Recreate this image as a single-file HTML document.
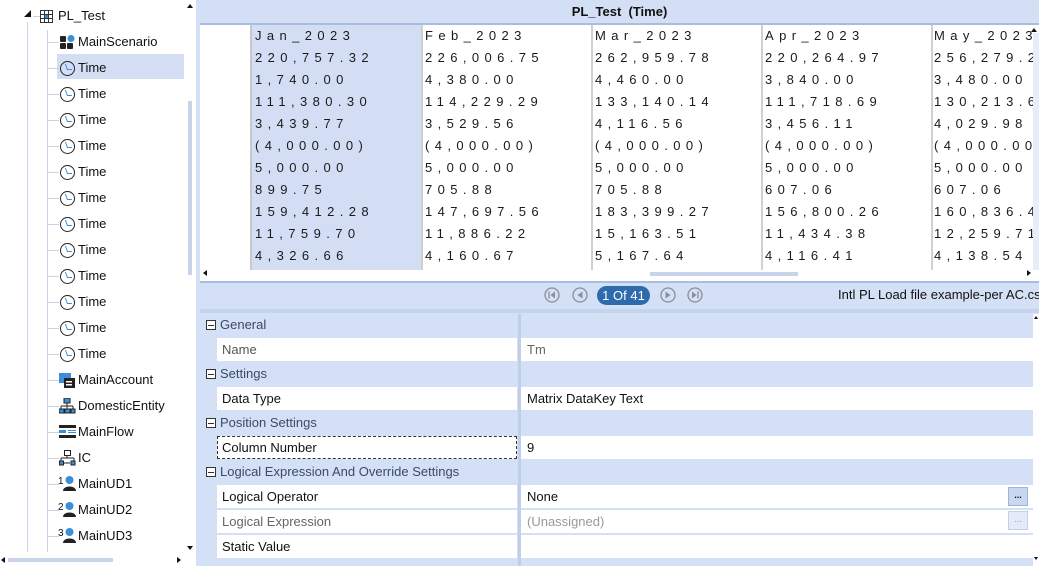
<!DOCTYPE html>
<html><head><meta charset="utf-8"><style>
*{margin:0;padding:0;box-sizing:border-box}
body{width:1039px;height:566px;overflow:hidden;position:relative;background:#d4e0f6;font-family:"Liberation Sans",sans-serif;font-size:13px;color:#111}
.a{position:absolute}
#left{left:0;top:0;width:196px;height:566px;background:#fff}
.it{position:absolute;left:78px;height:20px;line-height:20px;font-size:13px;color:#111}
.hl{position:absolute;left:47px;width:12px;height:1px;background:#c8d4ea}
.clk{position:absolute;left:60px;width:15px;height:15px;border:1.5px solid #222;border-radius:50%}
.clk:after{content:"";position:absolute;left:5px;top:2px;width:4px;height:5px;border-left:1.5px solid #3a8fd8;border-bottom:1.5px solid #3a8fd8;transform:skewX(20deg)}
.num{position:absolute;font-size:13px;letter-spacing:5.4px;color:#1a1a1a;white-space:nowrap}
.pr{position:absolute;left:200px;width:833px;height:24px;line-height:24px}
.grp{color:#3c4a66}
.box{position:absolute;left:6px;top:7px;width:10px;height:10px;border:1px solid #333;background:#fff}
.box:after{content:"";position:absolute;left:1px;top:3.5px;width:6px;height:1px;background:#333}
.lab{position:absolute;left:17px;width:300px;height:23px;background:#fff;padding-left:5px}
.val{position:absolute;left:321px;width:512px;height:23px;background:#fff;padding-left:6px}
</style></head><body>
<div id="left" class="a">
 <div class="a" style="left:27px;top:22px;width:1px;height:530px;background:#c8d4ea"></div>
 <div class="a" style="left:47px;top:30px;width:1px;height:522px;background:#c8d4ea"></div>
 <div class="a" style="left:24px;top:10px;width:0;height:0;border-left:7px solid transparent;border-bottom:7px solid #111"></div>
 <div class="a" style="left:33px;top:16px;width:7px;height:1px;background:#c8d4ea"></div>
 <svg class="a" style="left:39px;top:9px" width="15" height="15"><rect x="1.5" y="1.5" width="12" height="12" fill="none" stroke="#333"/><path d="M5.5 1v13M9.5 1v13M1 5.5h13M1 9.5h13" stroke="#333"/><rect x="6" y="6" width="3" height="3" fill="#3a8fd8"/></svg>
 <div class="it" style="left:58px;top:6px">PL_Test</div>
 <div class="a" style="left:57px;top:54px;width:127px;height:25px;background:#d3def5"></div>
 <div class="hl" style="top:42px"></div>
 <svg class="a" style="left:60px;top:34px" width="16" height="16"><rect x="0" y="2" width="6" height="6" rx="1" fill="#222"/><rect x="0" y="9" width="6" height="6" rx="1" fill="#222"/><rect x="7" y="9" width="6" height="6" rx="1" fill="#222"/><circle cx="11" cy="4.5" r="3.5" fill="#3a8fd8"/></svg>
 <div class="it" style="top:32px">MainScenario</div>
 <div class="hl" style="top:68px"></div><div class="clk" style="top:61px"></div><div class="it" style="top:58px">Time</div>
 <div class="hl" style="top:94px"></div><div class="clk" style="top:87px"></div><div class="it" style="top:84px">Time</div>
 <div class="hl" style="top:120px"></div><div class="clk" style="top:113px"></div><div class="it" style="top:110px">Time</div>
 <div class="hl" style="top:146px"></div><div class="clk" style="top:139px"></div><div class="it" style="top:136px">Time</div>
 <div class="hl" style="top:172px"></div><div class="clk" style="top:165px"></div><div class="it" style="top:162px">Time</div>
 <div class="hl" style="top:198px"></div><div class="clk" style="top:191px"></div><div class="it" style="top:188px">Time</div>
 <div class="hl" style="top:224px"></div><div class="clk" style="top:217px"></div><div class="it" style="top:214px">Time</div>
 <div class="hl" style="top:250px"></div><div class="clk" style="top:243px"></div><div class="it" style="top:240px">Time</div>
 <div class="hl" style="top:276px"></div><div class="clk" style="top:269px"></div><div class="it" style="top:266px">Time</div>
 <div class="hl" style="top:302px"></div><div class="clk" style="top:295px"></div><div class="it" style="top:292px">Time</div>
 <div class="hl" style="top:328px"></div><div class="clk" style="top:321px"></div><div class="it" style="top:318px">Time</div>
 <div class="hl" style="top:354px"></div><div class="clk" style="top:347px"></div><div class="it" style="top:344px">Time</div>
 <div class="hl" style="top:380px"></div>
 <svg class="a" style="left:59px;top:372px" width="17" height="17"><rect x="0" y="1" width="12" height="10" fill="#3a8fd8"/><rect x="5" y="6" width="11" height="10" fill="#222"/><rect x="7" y="9" width="6" height="1.5" fill="#fff"/><rect x="7" y="12" width="6" height="1.5" fill="#fff"/></svg>
 <div class="it" style="top:370px">MainAccount</div>
 <div class="hl" style="top:406px"></div>
 <svg class="a" style="left:59px;top:398px" width="17" height="16"><rect x="5" y="0" width="6" height="5" fill="#3a8fd8" stroke="#222"/><path d="M8 5v3M2 8h12M2 8v3M14 8v3M8 8v3" stroke="#222" fill="none"/><rect x="0" y="11" width="5" height="4" fill="#3a8fd8" stroke="#222"/><rect x="6" y="11" width="5" height="4" fill="#3a8fd8" stroke="#222"/><rect x="12" y="11" width="4" height="4" fill="#3a8fd8" stroke="#222"/></svg>
 <div class="it" style="top:396px">DomesticEntity</div>
 <div class="hl" style="top:432px"></div>
 <svg class="a" style="left:59px;top:425px" width="17" height="14"><rect x="0" y="0" width="17" height="3" fill="#222"/><rect x="0" y="5" width="7" height="3" fill="#3a8fd8"/><rect x="9" y="5" width="8" height="1" fill="#3a8fd8"/><rect x="9" y="7" width="8" height="1" fill="#3a8fd8"/><rect x="0" y="10" width="17" height="3" fill="#222"/></svg>
 <div class="it" style="top:422px">MainFlow</div>
 <div class="hl" style="top:458px"></div>
 <svg class="a" style="left:59px;top:450px" width="17" height="16"><rect x="5.5" y="0.5" width="6" height="5" fill="#fff" stroke="#222"/><path d="M8 5v3M2 8h13M2 8v3M15 8v3" stroke="#222" fill="none"/><rect x="0.5" y="11" width="4" height="4" fill="#3a8fd8" stroke="#222"/><rect x="12" y="11" width="4" height="4" fill="#3a8fd8" stroke="#222"/><path d="M5 13h6" stroke="#222"/></svg>
 <div class="it" style="top:448px">IC</div>
 <div class="hl" style="top:484px"></div><div class="it" style="left:58px;top:472px;font-size:10px">1</div>
 <svg class="a" style="left:63px;top:476px" width="13" height="15"><circle cx="6.5" cy="4" r="4" fill="#3a8fd8"/><path d="M0 15c0-6 13-6 13 0z" fill="#222"/></svg>
 <div class="it" style="top:474px">MainUD1</div>
 <div class="hl" style="top:510px"></div><div class="it" style="left:58px;top:498px;font-size:10px">2</div>
 <svg class="a" style="left:63px;top:502px" width="13" height="15"><circle cx="6.5" cy="4" r="4" fill="#3a8fd8"/><path d="M0 15c0-6 13-6 13 0z" fill="#222"/></svg>
 <div class="it" style="top:500px">MainUD2</div>
 <div class="hl" style="top:536px"></div><div class="it" style="left:58px;top:524px;font-size:10px">3</div>
 <svg class="a" style="left:63px;top:528px" width="13" height="15"><circle cx="6.5" cy="4" r="4" fill="#3a8fd8"/><path d="M0 15c0-6 13-6 13 0z" fill="#222"/></svg>
 <div class="it" style="top:526px">MainUD3</div>
 <div class="a" style="left:187px;top:4px;width:0;height:0;border-left:3px solid transparent;border-right:3px solid transparent;border-bottom:4px solid #111"></div>
 <div class="a" style="left:188px;top:101px;width:4px;height:174px;background:#c8d4ea"></div>
 <div class="a" style="left:187px;top:546px;width:0;height:0;border-left:3px solid transparent;border-right:3px solid transparent;border-top:4px solid #111"></div>
 <div class="a" style="left:1px;top:557px;width:0;height:0;border-top:3px solid transparent;border-bottom:3px solid transparent;border-right:4px solid #111"></div>
 <div class="a" style="left:8px;top:558px;width:105px;height:4px;background:#c8d4ea"></div>
 <div class="a" style="left:177px;top:557px;width:0;height:0;border-top:3px solid transparent;border-bottom:3px solid transparent;border-left:4px solid #111"></div>
</div>
<div class="a" style="left:200px;top:0;width:839px;height:25px;background:#d3dff5;border-bottom:2px solid #a9bde3;text-align:center;font-weight:bold;font-size:13px;line-height:24px">PL_Test&nbsp; (Time)</div>
<div class="a" style="left:200px;top:25px;width:839px;height:256px;background:#fff;overflow:hidden">
 <div class="a" style="left:50px;top:0;width:172px;height:245px;background:#d3def5;border-left:2px solid #c8c8c8"></div>
 <div class="a" style="left:221px;top:0;width:2px;height:245px;background:#d0d0d0"></div>
 <div class="a" style="left:391px;top:0;width:2px;height:245px;background:#d0d0d0"></div>
 <div class="a" style="left:561px;top:0;width:2px;height:245px;background:#d0d0d0"></div>
 <div class="a" style="left:731px;top:0;width:2px;height:245px;background:#d0d0d0"></div>
 <div class="num" style="left:55px;top:0px;line-height:22px">Jan_2023<br>220,757.32<br>1,740.00<br>111,380.30<br>3,439.77<br>(4,000.00)<br>5,000.00<br>899.75<br>159,412.28<br>11,759.70<br>4,326.66</div>
 <div class="num" style="left:225px;top:0px;line-height:22px">Feb_2023<br>226,006.75<br>4,380.00<br>114,229.29<br>3,529.56<br>(4,000.00)<br>5,000.00<br>705.88<br>147,697.56<br>11,886.22<br>4,160.67</div>
 <div class="num" style="left:395px;top:0px;line-height:22px">Mar_2023<br>262,959.78<br>4,460.00<br>133,140.14<br>4,116.56<br>(4,000.00)<br>5,000.00<br>705.88<br>183,399.27<br>15,163.51<br>5,167.64</div>
 <div class="num" style="left:565px;top:0px;line-height:22px">Apr_2023<br>220,264.97<br>3,840.00<br>111,718.69<br>3,456.11<br>(4,000.00)<br>5,000.00<br>607.06<br>156,800.26<br>11,434.38<br>4,116.41</div>
 <div class="num" style="left:734px;top:0px;line-height:22px">May_2023<br>256,279.22<br>3,480.00<br>130,213.60<br>4,029.98<br>(4,000.00)<br>5,000.00<br>607.06<br>160,836.40<br>12,259.71<br>4,138.54</div>
 <div class="a" style="left:833px;top:8px;width:6px;height:240px;background:#e8eef9"></div>
 <div class="a" style="left:0;top:245px;width:839px;height:11px;background:#fff"></div>
 <div class="a" style="left:3px;top:245px;width:0;height:0;border-top:3px solid transparent;border-bottom:3px solid transparent;border-right:4px solid #111"></div>
 <div class="a" style="left:450px;top:247px;width:148px;height:4px;background:#c8d4ea"></div>
 <div class="a" style="left:827px;top:245px;width:0;height:0;border-top:3px solid transparent;border-bottom:3px solid transparent;border-left:4px solid #111"></div>
</div>
<div class="a" style="left:1031px;top:28px;width:0;height:0;border-left:3px solid transparent;border-right:3px solid transparent;border-bottom:4px solid #111"></div>
<div class="a" style="left:200px;top:281px;width:839px;height:2px;background:#a9bde3"></div>
<svg class="a" style="left:543px;top:286px" width="165" height="18" fill="none" stroke="#8a8f99" stroke-width="1.3">
 <circle cx="9" cy="9" r="7"/><path d="M6 5.5v7" /><path d="M12 5.5v7L7.5 9z" fill="#8a8f99" stroke="none"/>
 <circle cx="37" cy="9" r="7"/><path d="M39.5 5.5v7L34.5 9z" fill="#8a8f99" stroke="none"/>
 <circle cx="125" cy="9" r="7"/><path d="M122.5 5.5v7L127.5 9z" fill="#8a8f99" stroke="none"/>
 <circle cx="152" cy="9" r="7"/><path d="M149 5.5v7L153.5 9z" fill="#8a8f99" stroke="none"/><path d="M155 5.5v7"/>
</svg>
<div class="a" style="left:597px;top:286px;width:53px;height:19px;border-radius:10px;background:#2f6aad;color:#fff;text-align:center;line-height:19px;font-size:13px">1 Of 41</div>
<div class="a" style="left:838px;top:287px;font-size:13px;white-space:nowrap">Intl PL Load file example-per AC.csv</div>
<div class="a" style="left:200px;top:309px;width:839px;height:4px;background:#c6d3ec"></div>
<div class="a" style="left:518px;top:314px;width:3px;height:252px;background:#c0cfe9"></div>
<div class="pr grp" style="top:313px"><div class="box"></div><span style="margin-left:20px">General</span></div>
<div class="pr" style="top:338px"><div class="lab" style="color:#555">Name</div><div class="val" style="color:#666">Tm</div></div>
<div class="pr grp" style="top:362px"><div class="box"></div><span style="margin-left:20px">Settings</span></div>
<div class="pr" style="top:387px"><div class="lab">Data Type</div><div class="val">Matrix DataKey Text</div></div>
<div class="pr grp" style="top:411px"><div class="box"></div><span style="margin-left:20px">Position Settings</span></div>
<div class="pr" style="top:436px"><div class="lab" style="border:1px dashed #333;padding-left:4px;line-height:21px">Column Number</div><div class="val">9</div></div>
<div class="pr grp" style="top:460px"><div class="box"></div><span style="margin-left:20px">Logical Expression And Override Settings</span></div>
<div class="pr" style="top:485px"><div class="lab">Logical Operator</div><div class="val">None</div></div>
<div class="pr" style="top:510px"><div class="lab" style="color:#666">Logical Expression</div><div class="val" style="color:#999">(Unassigned)</div></div>
<div class="pr" style="top:535px"><div class="lab">Static Value</div><div class="val"></div></div>
<div class="a" style="left:1008px;top:487px;width:20px;height:19px;background:#c9d7f0;border:1px solid #9fb3d8;text-align:center;font-size:9px;line-height:14px;font-weight:bold">...</div>
<div class="a" style="left:1008px;top:511px;width:20px;height:19px;background:#e4ebf8;border:1px solid #c3d0ea;text-align:center;font-size:9px;line-height:14px;color:#999">...</div>
<div class="a" style="left:1033px;top:314px;width:6px;height:252px;background:#fff"></div>
<div class="a" style="left:1034px;top:316px;width:0;height:0;border-left:2px solid transparent;border-right:2px solid transparent;border-bottom:3px solid #111"></div>
<div class="a" style="left:1034px;top:557px;width:0;height:0;border-left:2px solid transparent;border-right:2px solid transparent;border-top:3px solid #111"></div>
</body></html>
